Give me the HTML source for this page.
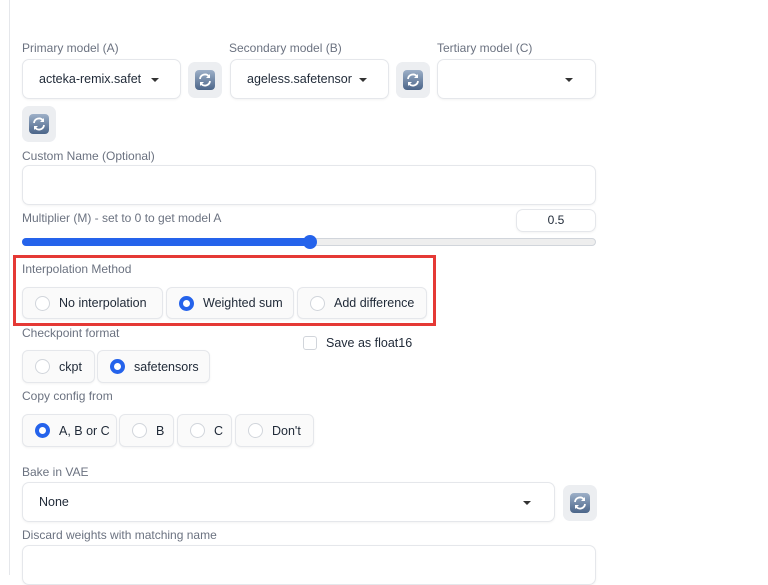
<!DOCTYPE html>
<html><head><meta charset="utf-8"><style>
*{box-sizing:border-box;margin:0;padding:0}
body{width:768px;height:575px;overflow:hidden;background:#fff;font-family:"Liberation Sans",sans-serif;position:relative}
.a{position:absolute}
.lbl{position:absolute;font-size:12px;color:#6b7280;line-height:14px}
.box{position:absolute;border:1px solid #e5e7eb;border-radius:7px;background:#fff;box-shadow:0 1px 2px rgba(0,0,0,.05)}
.dd{font-size:12.5px;color:#1f2937;padding-left:16px;display:flex;align-items:center;white-space:nowrap;overflow:hidden}
.car{position:absolute;width:0;height:0;border-left:4px solid transparent;border-right:4px solid transparent;border-top:4px solid #333;top:50%;margin-top:-1px}
.rb{position:absolute;width:34px;height:36px;background:#eceef1;border-radius:7px;display:flex;align-items:center;justify-content:center}
.rb svg{display:block}
.rad{position:absolute;border:1px solid #e5e7eb;border-radius:6px;background:#fafafa;font-size:12.5px;color:#1f2937;display:flex;align-items:center;padding-left:12px;box-shadow:0 1px 2px rgba(0,0,0,.05);white-space:nowrap}
.rad b{width:15px;height:15px;border-radius:50%;border:1px solid #d1d5db;background:#fff;margin-right:9px;flex:none}
.rad b.on{border:4px solid #2563eb;background:#fff}
</style></head><body>
<div class="a" style="left:9px;top:0;width:1px;height:575px;background:#e5e7eb"></div>

<svg width="0" height="0" style="position:absolute"><defs><linearGradient id="g" x1="0" y1="0" x2="0" y2="1"><stop offset="0" stop-color="#9db0c8"/><stop offset="1" stop-color="#4b6589"/></linearGradient></defs></svg>

<div class="lbl" style="left:22px;top:41px">Primary model (A)</div>
<div class="lbl" style="left:229px;top:41px">Secondary model (B)</div>
<div class="lbl" style="left:437px;top:41px">Tertiary model (C)</div>
<div class="box dd" style="left:22px;top:59px;width:159px;height:40px">acteka-remix.safet<span class="car" style="left:128px"></span></div>
<div class="rb" style="left:188px;top:62px"><svg width="20" height="20"><rect width="20" height="20" rx="4" fill="url(#g)"/><path d="M5 9a5 5 0 0 1 9-2.5M15 11a5 5 0 0 1-9 2.5" stroke="#fff" stroke-width="1.8" fill="none"/><path d="M15 4v4h-4z" fill="#fff"/><path d="M5 16v-4h4z" fill="#fff"/></svg></div>
<div class="box dd" style="left:230px;top:59px;width:159px;height:40px"><span style="display:inline-block;width:105px;overflow:hidden">ageless.safetensors</span><span class="car" style="left:128px"></span></div>
<div class="rb" style="left:396px;top:62px"><svg width="20" height="20"><rect width="20" height="20" rx="4" fill="url(#g)"/><path d="M5 9a5 5 0 0 1 9-2.5M15 11a5 5 0 0 1-9 2.5" stroke="#fff" stroke-width="1.8" fill="none"/><path d="M15 4v4h-4z" fill="#fff"/><path d="M5 16v-4h4z" fill="#fff"/></svg></div>
<div class="box dd" style="left:437px;top:59px;width:159px;height:40px"><span class="car" style="left:127px"></span></div>
<div class="rb" style="left:22px;top:106px"><svg width="20" height="20"><rect width="20" height="20" rx="4" fill="url(#g)"/><path d="M5 9a5 5 0 0 1 9-2.5M15 11a5 5 0 0 1-9 2.5" stroke="#fff" stroke-width="1.8" fill="none"/><path d="M15 4v4h-4z" fill="#fff"/><path d="M5 16v-4h4z" fill="#fff"/></svg></div>

<div class="lbl" style="left:22px;top:149px">Custom Name (Optional)</div>
<div class="box" style="left:22px;top:165px;width:574px;height:40px"></div>

<div class="lbl" style="left:22px;top:211px">Multiplier (M) - set to 0 to get model A</div>
<div class="box" style="left:516px;top:209px;width:80px;height:23px;font-size:12px;color:#1f2937;text-align:center;line-height:21px">0.5</div>
<div class="a" style="left:22px;top:238px;width:574px;height:8px;border:1px solid #d1d5db;border-radius:4px;background:#eee"></div>
<div class="a" style="left:22px;top:238px;width:290px;height:8px;border-radius:4px;background:#2563eb"></div>
<div class="a" style="left:303px;top:235px;width:14px;height:14px;border-radius:50%;background:#2563eb"></div>

<div class="a" style="left:13px;top:255px;width:423px;height:71px;border:3px solid #e53935"></div>
<div class="lbl" style="left:22px;top:262px">Interpolation Method</div>
<div class="rad" style="left:22px;top:287px;width:141px;height:32px"><b></b>No interpolation</div>
<div class="rad" style="left:166px;top:287px;width:128px;height:32px"><b class="on"></b>Weighted sum</div>
<div class="rad" style="left:297px;top:287px;width:130px;height:32px"><b></b>Add difference</div>

<div class="lbl" style="left:22px;top:326px">Checkpoint format</div>
<div class="a" style="left:303px;top:336px;width:14px;height:14px;border:1px solid #d1d5db;border-radius:3px"></div>
<div class="a" style="left:326px;top:336px;font-size:12.5px;color:#1f2937">Save as float16</div>
<div class="rad" style="left:22px;top:350px;width:73px;height:33px"><b></b>ckpt</div>
<div class="rad" style="left:97px;top:350px;width:113px;height:33px"><b class="on"></b>safetensors</div>

<div class="lbl" style="left:22px;top:389px">Copy config from</div>
<div class="rad" style="left:22px;top:414px;width:95px;height:33px"><b class="on"></b>A, B or C</div>
<div class="rad" style="left:119px;top:414px;width:55px;height:33px"><b></b>B</div>
<div class="rad" style="left:177px;top:414px;width:55px;height:33px"><b></b>C</div>
<div class="rad" style="left:235px;top:414px;width:79px;height:33px"><b></b>Don't</div>

<div class="lbl" style="left:22px;top:465px">Bake in VAE</div>
<div class="box dd" style="left:22px;top:482px;width:533px;height:40px">None<span class="car" style="left:500px"></span></div>
<div class="rb" style="left:563px;top:485px"><svg width="20" height="20"><rect width="20" height="20" rx="4" fill="url(#g)"/><path d="M5 9a5 5 0 0 1 9-2.5M15 11a5 5 0 0 1-9 2.5" stroke="#fff" stroke-width="1.8" fill="none"/><path d="M15 4v4h-4z" fill="#fff"/><path d="M5 16v-4h4z" fill="#fff"/></svg></div>

<div class="lbl" style="left:22px;top:528px">Discard weights with matching name</div>
<div class="box" style="left:22px;top:545px;width:574px;height:40px"></div>
</body></html>
